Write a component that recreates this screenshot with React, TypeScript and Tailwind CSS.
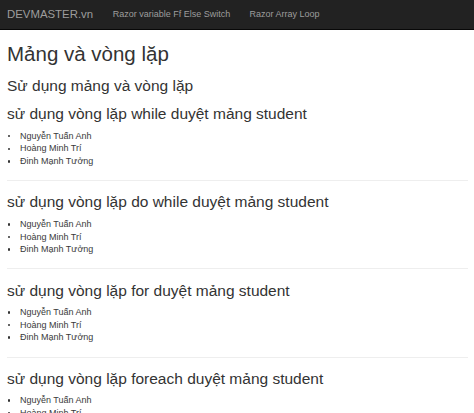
import React from "react";

const students = ["Nguyễn Tuấn Anh", "Hoàng Minh Trí", "Đinh Mạnh Tưởng"];
const sections = [
  "sử dụng vòng lặp while duyệt mảng student",
  "sử dụng vòng lặp do while duyệt mảng student",
  "sử dụng vòng lặp for duyệt mảng student",
  "sử dụng vòng lặp foreach duyệt mảng student",
];

export default function App() {
  return (
    <div className="min-h-[413px] bg-white font-['Liberation_Sans',Arial,sans-serif] text-[#333]">
      <nav className="flex h-[30px] items-center border-b border-[#080808] bg-[#222]">
        <span className="pl-[7px] pr-[10px] text-[11.4px] leading-none text-[#9d9d9d]">DEVMASTER.vn</span>
        <ul className="flex">
          <li className="px-[9.6px] text-[9px] leading-none text-[#9d9d9d]">Razor variable Ff Else Switch</li>
          <li className="px-[9.6px] text-[9px] leading-none text-[#9d9d9d]">Razor Array Loop</li>
        </ul>
      </nav>
      <div className="pl-[7px] pr-[6px]">
        <h1 className="mt-[12px] text-[20.5px] leading-[23px]">Mảng và vòng lặp</h1>
        <h2 className="mt-[12px] text-[15.5px] leading-[17px]">Sử dụng mảng và vòng lặp</h2>
        {sections.map((title, i) => (
          <div key={i}>
            {i > 0 && <hr className="border-0 border-t border-[#eee]" />}
            <h3 className={(i === 0 ? "mt-[11.3px]" : "mt-[12.2px]") + " text-[15.5px] leading-[17px]"}>{title}</h3>
            <ul className="mt-[7.6px] mb-[12.6px] text-[9px] leading-[12.6px] text-[#3a3a3a]">
              {students.map((s) => (
                <li key={s} className="flex items-center">
                  <span className="ml-[0.5px] mr-[10px] h-[2.5px] w-[2.5px] rounded-full bg-[#333]" />
                  <span>{s}</span>
                </li>
              ))}
            </ul>
          </div>
        ))}
      </div>
    </div>
  );
}
